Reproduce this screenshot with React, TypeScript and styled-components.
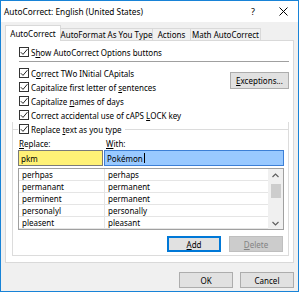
import React from 'react';
import styled, { createGlobalStyle } from 'styled-components';

const Global = createGlobalStyle`
  html, body {
    margin: 0;
    padding: 0;
    background: #ffffff;
  }
  * {
    box-sizing: border-box;
  }
`

const Ventana = styled.div`
  width: 299px;
  height: 292px;
  border: 1px solid #1883d7;
  background: #f0f0f0;
  display: flex;
  flex-direction: column;
  font-family: "Noto Sans", "Open Sans", sans-serif;
  font-size: 8px;
  color: #000;
`

const BarraTitulo = styled.div`
  height: 21px;
  background: #fff;
  display: flex;
  align-items: center;
  padding-left: 3px;
`

const Titulo = styled.span`
  flex: 1;
  font-size: 8.3px;
`

const BotaoTitulo = styled.div`
  width: 30px;
  height: 21px;
  display: flex;
  align-items: center;
  justify-content: center;
  font-size: 9px;
`

const Corpo = styled.div`
  flex: 1;
  display: flex;
  flex-direction: column;
  padding: 3px 4px 0 4px;
`

const Abas = styled.div`
  display: flex;
  align-items: flex-end;
  height: 15px;
  position: relative;
  z-index: 1;
`

const Aba = styled.div<{ $ativa?: boolean; $largura: number }>`
  width: ${p => p.$largura}px;
  height: ${p => (p.$ativa ? 16 : 12)}px;
  margin-bottom: ${p => (p.$ativa ? -1 : 0)}px;
  background: ${p => (p.$ativa ? '#fff' : '#f0f0f0')};
  border: 1px solid #d9d9d9;
  border-bottom: none;
  border-left: ${p => (p.$ativa ? '1px solid #d9d9d9' : 'none')};
  display: flex;
  align-items: center;
  justify-content: center;
  white-space: nowrap;
`

const Painel = styled.div`
  background: #fff;
  border: 1px solid #d9d9d9;
  padding: 4px 4px 6px 0;
  display: flex;
  flex-direction: column;
`

const Linha = styled.div`
  height: 14px;
  display: flex;
  align-items: center;
  padding-left: 13px;
  white-space: nowrap;
`

const Texto = styled.span`
  white-space: pre;
`

const Separador = styled.div`
  height: 1px;
  background: #a0a0a0;
  margin: 2px 0 4px 13px;
`

const BlocoOpcoes = styled.div`
  display: flex;
`

const ColunaOpcoes = styled.div`
  flex: 1;
  display: flex;
  flex-direction: column;
`

const Botao = styled.button<{ $largura: number; $foco?: boolean }>`
  width: ${p => p.$largura}px;
  height: 16px;
  padding: 0;
  font: inherit;
  color: ${p => (p.disabled ? '#838383' : '#000')};
  background: ${p => (p.disabled ? '#cccccc' : '#e1e1e1')};
  border: 1px solid ${p => (p.$foco ? '#0078d7' : p.disabled ? '#bfbfbf' : '#adadad')};
  box-shadow: ${p => (p.$foco ? 'inset 0 0 0 1px #0078d7' : 'none')};
  display: flex;
  align-items: center;
  justify-content: center;
  white-space: pre;
`

const BotaoExcecoes = styled(Botao)`
  margin-top: 6px;
  height: 17px;
`

const Grupo = styled.div`
  margin-left: 6px;
  border: 1px solid #dcdcdc;
  border-top: none;
  padding: 0 4px 3px 5px;
  display: flex;
  flex-direction: column;
`

const Legenda = styled.div`
  height: 14px;
  display: flex;
  align-items: center;
  margin: 0 -5px 0 -6px;
  white-space: nowrap;
  &::before {
    content: '';
    width: 6px;
    height: 1px;
    background: #dcdcdc;
    margin-right: 1px;
  }
  &::after {
    content: '';
    flex: 1;
    height: 1px;
    background: #dcdcdc;
    margin-left: 3px;
  }
`

const Rotulos = styled.div`
  height: 14px;
  display: flex;
  align-items: center;
`

const Rotulo = styled.span<{ $largura?: number }>`
  width: ${p => (p.$largura ? `${p.$largura}px` : 'auto')};
  padding-left: 1px;
`

const Entradas = styled.div`
  display: flex;
  gap: 1px;
`

const Entrada = styled.div<{ $cor: string; $borda: string; $largura?: number }>`
  height: 16px;
  ${p => (p.$largura ? `width: ${p.$largura}px;` : 'flex: 1;')}
  background: ${p => p.$cor};
  border: 1px solid ${p => p.$borda};
  display: flex;
  align-items: center;
  padding-left: 2px;
  white-space: nowrap;
`

const Cursor = styled.span`
  display: inline-block;
  width: 1px;
  height: 10px;
  background: #000;
  margin-left: 1px;
`

const Lista = styled.div`
  margin-top: 2px;
  height: 62px;
  border: 1px solid #a0a0a0;
  display: flex;
`

const Tabela = styled.div`
  flex: 1;
  display: flex;
  flex-direction: column;
`

const LinhaTabela = styled.div`
  height: 12px;
  display: flex;
  border-bottom: 1px solid #e5e5e5;
`

const Celula = styled.div<{ $largura?: number }>`
  ${p => (p.$largura ? `width: ${p.$largura}px; border-right: 1px solid #e5e5e5;` : 'flex: 1;')}
  display: flex;
  align-items: center;
  padding-left: 3px;
  white-space: nowrap;
`

const Rolagem = styled.div`
  width: 15px;
  background: #f0f0f0;
  display: flex;
  flex-direction: column;
  align-items: center;
  justify-content: space-between;
  padding: 4px 0 3px;
`

const Polegar = styled.div`
  width: 10px;
  height: 14px;
  background: #cdcdcd;
  margin-top: 6px;
  margin-bottom: auto;
`

const BotoesGrupo = styled.div`
  display: flex;
  justify-content: flex-end;
  gap: 8px;
  margin-top: 6px;
  padding-right: 1px;
`

const Rodape = styled.div`
  display: flex;
  justify-content: flex-end;
  gap: 7px;
  margin-top: 9px;
`

const CaixaMarca = styled.span`
  width: 10px;
  height: 10px;
  border: 1px solid #333;
  background: #fff;
  margin-right: 2px;
  display: inline-flex;
  flex-shrink: 0;
`

const Tecla = styled.span`
  text-decoration: underline;
`

const Marca = () => (
  <CaixaMarca>
    <svg width="8" height="8" viewBox="0 0 8 8">
      <path d="M0.8 4.2 L3 6.4 L7.4 1.2" fill="none" stroke="#222" strokeWidth="1" />
    </svg>
  </CaixaMarca>
)

const Seta = ({ baixo }: { baixo?: boolean }) => (
  <svg width="7" height="5" viewBox="0 0 7 5">
    <path d={baixo ? 'M0.5 1 L3.5 4 L6.5 1' : 'M0.5 4 L3.5 1 L6.5 4'} fill="none" stroke="#606060" strokeWidth="1.2" />
  </svg>
)

const entradas = [
  ['perhpas', 'perhaps'],
  ['permanant', 'permanent'],
  ['perminent', 'permanent'],
  ['personalyl', 'personally'],
  ['pleasent', 'pleasant'],
]

export default function App() {
  return (
    <>
      <Global />
      <Ventana>
        <BarraTitulo>
          <Titulo>AutoCorrect: English (United States)</Titulo>
          <BotaoTitulo>?</BotaoTitulo>
          <BotaoTitulo>
            <svg width="9" height="9" viewBox="0 0 9 9">
              <path d="M0.5 0.5 L8.5 8.5 M8.5 0.5 L0.5 8.5" stroke="#000" strokeWidth="1" />
            </svg>
          </BotaoTitulo>
        </BarraTitulo>
        <Corpo>
          <Abas>
            <Aba $ativa $largura={56}>AutoCorrect</Aba>
            <Aba $largura={92}>AutoFormat As You Type</Aba>
            <Aba $largura={38}>Actions</Aba>
            <Aba $largura={70}>Math AutoCorrect</Aba>
          </Abas>
          <Painel>
            <Linha>
              <Marca />
              <Texto>S<Tecla>h</Tecla>ow AutoCorrect Options buttons</Texto>
            </Linha>
            <Separador />
            <BlocoOpcoes>
              <ColunaOpcoes>
                <Linha>
                  <Marca />
                  <Texto>C<Tecla>o</Tecla>rrect TWo INitial CApitals</Texto>
                </Linha>
                <Linha>
                  <Marca />
                  <Texto>Capitalize first letter of <Tecla>s</Tecla>entences</Texto>
                </Linha>
                <Linha>
                  <Marca />
                  <Texto>Capitalize <Tecla>n</Tecla>ames of days</Texto>
                </Linha>
                <Linha>
                  <Marca />
                  <Texto>Correct accidental use of cAPS <Tecla>L</Tecla>OCK key</Texto>
                </Linha>
              </ColunaOpcoes>
              <BotaoExcecoes $largura={59}>
                <Texto><Tecla>E</Tecla>xceptions...</Texto>
              </BotaoExcecoes>
            </BlocoOpcoes>
            <Grupo>
              <Legenda>
                <Marca />
                <Texto>Replace <Tecla>t</Tecla>ext as you type</Texto>
              </Legenda>
              <Rotulos>
                <Rotulo $largura={87}>
                  <Tecla>R</Tecla>eplace:
                </Rotulo>
                <Rotulo>
                  <Tecla>W</Tecla>ith:
                </Rotulo>
              </Rotulos>
              <Entradas>
                <Entrada $cor="#fff176" $borda="#7a7a7a" $largura={85}>
                  pkm
                </Entrada>
                <Entrada $cor="#99c9ff" $borda="#3c7fd6">
                  Pokémon<Cursor />
                </Entrada>
              </Entradas>
              <Lista>
                <Tabela>
                  {entradas.map(([errado, certo]) => (
                    <LinhaTabela key={errado}>
                      <Celula $largura={86}>{errado}</Celula>
                      <Celula>{certo}</Celula>
                    </LinhaTabela>
                  ))}
                </Tabela>
                <Rolagem>
                  <Seta />
                  <Polegar />
                  <Seta baixo />
                </Rolagem>
              </Lista>
              <BotoesGrupo>
                <Botao $largura={54} $foco>
                  <Texto><Tecla>A</Tecla>dd</Texto>
                </Botao>
                <Botao $largura={54} disabled>
                  <Texto><Tecla>D</Tecla>elete</Texto>
                </Botao>
              </BotoesGrupo>
            </Grupo>
          </Painel>
          <Rodape>
            <Botao $largura={54}>OK</Botao>
            <Botao $largura={54}>Cancel</Botao>
          </Rodape>
        </Corpo>
      </Ventana>
    </>
  )
}
